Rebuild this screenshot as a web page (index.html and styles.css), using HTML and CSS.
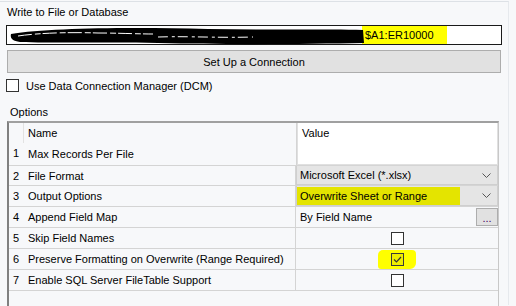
FILE: index.html
```html
<!DOCTYPE html>
<html>
<head>
<meta charset="utf-8">
<link rel="stylesheet" href="styles.css">
</head>
<body>
<div class="page">
  <div class="title">Write to File or Database</div>
  <div class="textbox">
    <svg class="scribble" width="360" height="20" viewBox="0 0 360 20">
      <path d="M3 8 C 40 2, 120 1, 200 3 C 260 4, 320 3, 355 4 L 356 17 C 300 18, 220 19, 150 17 C 90 16, 40 17, 12 16 C 4 15, 2 12, 3 8 Z" fill="#000"/>
      <path d="M10 10 C 30 7, 60 6, 90 7 C 110 7, 130 8, 145 8" stroke="#fff" stroke-width="1" fill="none" stroke-dasharray="14 3 6 2"/>
      <path d="M150 11 C 180 10, 210 12, 245 11" stroke="#fff" stroke-width="1" fill="none" stroke-dasharray="10 4 3 3"/>
    </svg>
    <span class="hl-text">$A1:ER10000</span>
  </div>
  <div class="button">Set Up a Connection</div>
  <div class="check-row">
    <span class="cbox"></span>
    <span>Use Data Connection Manager (DCM)</span>
  </div>
  <div class="options-label">Options</div>
  <div class="grid">
    <div class="top-block">
      <div class="numcol">
        <div class="hnum"></div>
        <div class="num">1</div>
      </div>
      <div class="namecol">
        <div class="hname">Name</div>
        <div class="name">Max Records Per File</div>
      </div>
      <div class="valhead">Value</div>
    </div>
    <div class="row r20">
      <div class="num">2</div><div class="name">File Format</div>
      <div class="val"><div class="combo"><span>Microsoft Excel (*.xlsx)</span><svg class="chev" width="9" height="5" viewBox="0 0 9 5"><path d="M0.5 0.5 L4.5 4.5 L8.5 0.5" stroke="#555" fill="none"/></svg></div></div>
    </div>
    <div class="row">
      <div class="num">3</div><div class="name">Output Options</div>
      <div class="val"><div class="combo"><span class="yellow">Overwrite Sheet or Range</span><svg class="chev" width="9" height="5" viewBox="0 0 9 5"><path d="M0.5 0.5 L4.5 4.5 L8.5 0.5" stroke="#555" fill="none"/></svg></div></div>
    </div>
    <div class="row">
      <div class="num">4</div><div class="name">Append Field Map</div>
      <div class="val fieldmap"><span>By Field Name</span><span class="dots">...</span></div>
    </div>
    <div class="row">
      <div class="num">5</div><div class="name">Skip Field Names</div>
      <div class="val center"><span class="cbox"></span></div>
    </div>
    <div class="row">
      <div class="num">6</div><div class="name">Preserve Formatting on Overwrite (Range Required)</div>
      <div class="val center"><span class="blob"><span class="cbox checked"><svg width="11" height="11" viewBox="0 0 11 11"><path d="M2 5.5 L4.5 8 L9 3" stroke="#333" stroke-width="1.2" fill="none"/></svg></span></span></div>
    </div>
    <div class="row">
      <div class="num">7</div><div class="name">Enable SQL Server FileTable Support</div>
      <div class="val center"><span class="cbox"></span></div>
    </div>
  </div>
</div>
</body>
</html>
```
FILE: styles.css
```css
html, body {
  margin: 0;
  padding: 0;
}
body {
  width: 516px;
  height: 306px;
  overflow: hidden;
  background: #f7f8fa;
  font-family: "Liberation Sans", Arial, sans-serif;
  font-size: 11px;
  color: #000;
}
.page {
  margin-top: 1px;
  border-top: 1px solid #dde1e6;
  height: 304px;
  width: 509px;
  border-right: 1px solid #e6e9ed;
  box-sizing: border-box;
}
.title {
  margin: 4px 0 0 7px;
  line-height: 13px;
  height: 13px;
}
.textbox {
  position: relative;
  margin: 6px 0 0 6px;
  width: 496px;
  height: 20px;
  box-sizing: border-box;
  border: 1px solid #1a1a1a;
  background: #fff;
  display: flex;
  align-items: center;
}
.scribble {
  position: absolute;
  left: 1px;
  top: 0;
}
.hl-text {
  margin-left: 355px;
  background: #ffff00;
  height: 18px;
  line-height: 18px;
  padding: 0 13px 0 3px;
}
.button {
  margin: 5px 0 0 7px;
  width: 494px;
  height: 23px;
  box-sizing: border-box;
  border: 1px solid #adadad;
  background: #e1e1e1;
  display: flex;
  align-items: center;
  justify-content: center;
}
.cbox {
  display: inline-flex;
  width: 13px;
  height: 13px;
  box-sizing: border-box;
  border: 1px solid #333;
  background: #fff;
  align-items: center;
  justify-content: center;
}
.check-row {
  margin: 6px 0 0 6px;
  display: flex;
  align-items: center;
  gap: 7px;
  height: 13px;
}
.options-label {
  margin: 14px 0 0 10px;
  line-height: 13px;
  height: 13px;
}
.grid {
  margin: 2px 0 0 7px;
  width: 492px;
  height: 200px;
  box-sizing: border-box;
  border-top: 2px solid #a0a0a0;
  border-left: 2px solid #808080;
  border-right: 1px solid #c8c8c8;
}
.top-block {
  display: flex;
  height: 43px;
  border-bottom: 1px solid #d4d4d4;
  box-sizing: border-box;
}
.numcol { width: 15px; }
.hnum {
  height: 20px;
  border-right: 1px solid #e2e2e2;
}
.namecol {
  width: 272px;
  border-right: 1px solid #d4d4d4;
}
.hname, .name {
  line-height: 21px;
  height: 21px;
  padding-left: 4px;
}
.hname { line-height: 20px; height: 21px; }
.top-block .num { line-height: 21px; }
.valhead {
  flex: 1;
  background: #fff;
  border: 1px solid #e0e0e0;
  border-top: none;
  padding: 4px 0 0 4px;
  line-height: 13px;
}
.row {
  display: flex;
  height: 21px;
  border-bottom: 1px solid #d4d4d4;
  box-sizing: border-box;
}
.row.r20 { height: 20px; }
.num {
  width: 15px;
  text-align: left;
  padding-left: 4px;
  box-sizing: border-box;
  line-height: 20px;
}
.row .name {
  width: 272px;
  box-sizing: border-box;
  line-height: 20px;
  height: auto;
  border-right: 1px solid #d4d4d4;
}
.val {
  flex: 1;
  display: flex;
  align-items: center;
}
.combo {
  flex: 1;
  height: 100%;
  background: #e5e5e5;
  border: 1px solid #cfcfcf;
  border-top: none;
  box-sizing: border-box;
  display: flex;
  align-items: center;
  justify-content: space-between;
  padding-right: 6px;
}
.combo span {
  padding-left: 3px;
  line-height: 18px;
}
.combo .yellow {
  background: #e4e400;
  width: 160px;
  height: 18px;
}
.chev { display: block; }
.fieldmap {
  justify-content: space-between;
  padding-left: 4px;
}
.dots {
  width: 22px;
  height: 18px;
  box-sizing: border-box;
  border: 1px solid #adadad;
  background: #e1e1e1;
  display: flex;
  justify-content: center;
  line-height: 18px;
  color: #400060;
}
.center { justify-content: center; }
.blob {
  display: inline-flex;
  align-items: center;
  justify-content: center;
  width: 38px;
  height: 19px;
  background: #ffff00;
  border-radius: 5px 4px 6px 3px;
}
.checked {
  background: #eeee00;
  border-color: #3a3a3a;
}
```
